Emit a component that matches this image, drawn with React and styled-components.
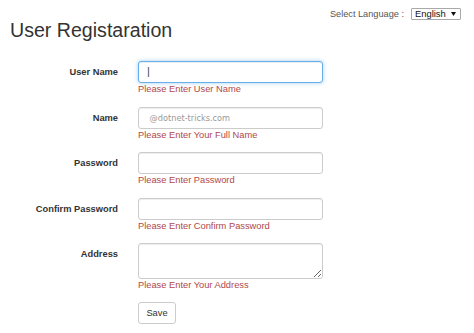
import React from "react"
import styled, { createGlobalStyle } from "styled-components"

const GlobalStyle = createGlobalStyle`
  html, body {
    margin: 0;
    padding: 0;
    background: #fff;
  }
  body {
    font-family: "Liberation Sans", Arial, sans-serif;
    color: #333;
  }
`

const Page = styled.div`
  width: 474px;
  height: 333px;
  box-sizing: border-box;
  padding: 8px 13px 0 10px;
  overflow: hidden;
`

const TopBar = styled.div`
  display: flex;
  justify-content: flex-end;
  align-items: center;
  gap: 7px;
  height: 12px;
  font-size: 9.2px;
  color: #555;
`

const LangSelect = styled.div`
  display: flex;
  align-items: center;
  justify-content: space-between;
  box-sizing: border-box;
  width: 50px;
  height: 12px;
  padding: 0 4px 0 3px;
  border: 1px solid #a9a9a9;
  border-radius: 1px;
  background: #fff;
  color: #111;
  font-size: 9.4px;
  line-height: 10px;
`

const Title = styled.h2`
  margin: 0 0 21px;
  font-size: 19.6px;
  font-weight: 400;
  line-height: 20px;
  color: #333;
`

const Form = styled.form`
  display: flex;
  flex-direction: column;
  margin: 0;
`

const Row = styled.div`
  display: grid;
  grid-template-columns: 108px 185px;
  column-gap: 20px;
  margin-bottom: ${(p) => p.$gap || 10.5}px;
`

const Label = styled.label`
  text-align: right;
  font-size: 9.3px;
  font-weight: 700;
  line-height: 22px;
  color: #333;
`

const Field = styled.div`
  display: flex;
  flex-direction: column;
`

const Input = styled.input`
  box-sizing: border-box;
  width: 185px;
  height: 22px;
  padding: 0 8px;
  border: 1px solid ${(p) => (p.$focused ? "#66afe9" : "#ccc")};
  border-radius: 3px;
  box-shadow: ${(p) =>
    p.$focused
      ? "inset 0 1px 1px rgba(0,0,0,.075), 0 0 4px rgba(102,175,233,.6)"
      : "inset 0 1px 1px rgba(0,0,0,.075)"};
  font-family: "DejaVu Sans", sans-serif;
  font-size: 8.2px;
  color: #555;
  outline: none;

  &::placeholder {
    color: ${(p) => (p.$focused ? "#444" : "#999")};
    font-family: ${(p) =>
      p.$focused ? '"Liberation Sans", Arial, sans-serif' : '"DejaVu Sans", sans-serif'};
    font-size: ${(p) => (p.$focused ? "11px" : "8.2px")};
  }
`

const TextArea = styled.textarea`
  box-sizing: border-box;
  width: 185px;
  height: 36px;
  padding: 4px 8px;
  border: 1px solid #ccc;
  border-radius: 3px;
  box-shadow: inset 0 1px 1px rgba(0,0,0,.075);
  font-family: "Liberation Sans", Arial, sans-serif;
  font-size: 9.3px;
  outline: none;
  display: block;
`

const Error = styled.span`
  font-size: 9.3px;
  line-height: 13px;
  color: #b0484a;
`

const SaveButton = styled.button`
  box-sizing: border-box;
  width: 38px;
  height: 22px;
  padding: 0;
  border: 1px solid #ccc;
  border-radius: 3px;
  background: #fff;
  font-family: "Liberation Sans", Arial, sans-serif;
  font-size: 9.3px;
  color: #333;
`

const fields = [
  { label: "User Name", error: "Please Enter User Name", placeholder: "|", focused: true },
  { label: "Name", error: "Please Enter Your Full Name", placeholder: " @dotnet-tricks.com" },
  { label: "Password", error: "Please Enter Password", type: "password" },
  { label: "Confirm Password", error: "Please Enter Confirm Password", type: "password" },
]

const App = () => {
  return (
    <Page>
      <GlobalStyle />
      <TopBar>
        <span>Select Language :</span>
        <LangSelect>
          <span>English</span>
          <svg width="5" height="4" viewBox="0 0 5 4">
            <path d="M0 0 H5 L2.5 4 Z" fill="#111" />
          </svg>
        </LangSelect>
      </TopBar>
      <Title>User Registaration</Title>
      <Form onSubmit={(e) => e.preventDefault()}>
        {fields.map((f) => (
          <Row key={f.label}>
            <Label>{f.label}</Label>
            <Field>
              <Input
                type={f.type || "text"}
                placeholder={f.placeholder}
                $focused={f.focused}
              />
              <Error>{f.error}</Error>
            </Field>
          </Row>
        ))}
        <Row $gap={10}>
          <Label>Address</Label>
          <Field>
            <TextArea />
            <Error>Please Enter Your Address</Error>
          </Field>
        </Row>
        <Row>
          <span />
          <div>
            <SaveButton type="submit">Save</SaveButton>
          </div>
        </Row>
      </Form>
    </Page>
  )
}

export default App
